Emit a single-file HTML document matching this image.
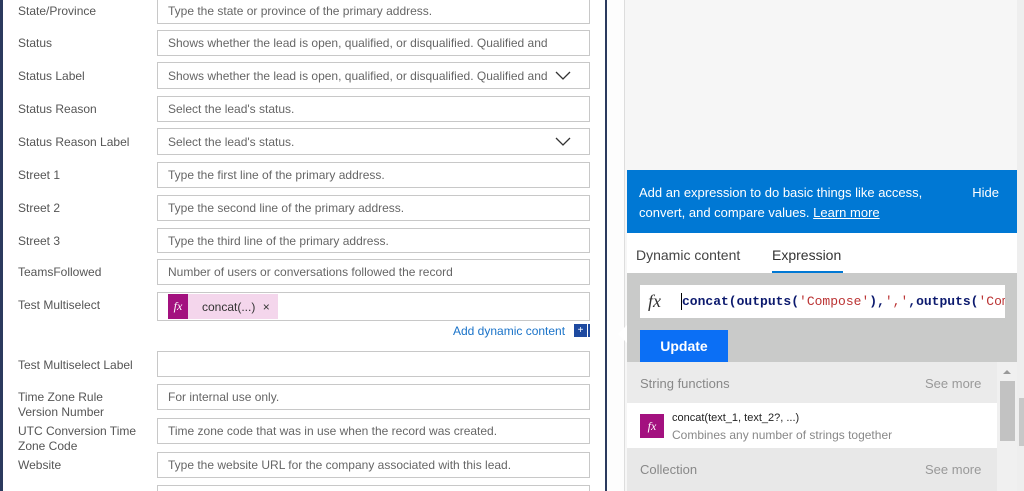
<!DOCTYPE html>
<html><head><style>
*{box-sizing:border-box;margin:0;padding:0}
html,body{width:1024px;height:491px;overflow:hidden}
body{background:#fff;font-family:"Liberation Sans",sans-serif;position:relative}
.lbl{position:absolute;left:18px;font-size:12px;color:#555;line-height:15px}
.box{position:absolute;left:157px;width:433px;border:1px solid #c8c8c8;background:#fff;font-size:12px;color:#666;padding-left:10px;display:flex;align-items:center;white-space:nowrap;overflow:hidden}
.chev{position:absolute;right:18px;top:6px}
.abs{position:absolute}
</style></head><body>
<div class="abs" style="left:0;top:0;width:3px;height:491px;background:#2b3a5e"></div>
<div class="abs" style="left:605px;top:0;width:2px;height:491px;background:#2b3a5e"></div>
<div class="abs" style="left:607px;top:0;width:18px;height:491px;background:#fdfdfd"></div>
<div class="abs" style="left:624px;top:0;width:1px;height:491px;background:#ddd"></div>
<div class="abs" style="left:625px;top:0;width:399px;height:491px;background:#f6f6f6"></div>
<div class="abs" style="left:1017px;top:0;width:7px;height:491px;background:#eee"></div>

<div class="lbl" style="top:4px">State/Province</div><div class="box" style="top:-2px;height:26px">Type the state or province of the primary address.</div>
<div class="lbl" style="top:36px">Status</div><div class="box" style="top:30px;height:26px">Shows whether the lead is open, qualified, or disqualified. Qualified and</div>
<div class="lbl" style="top:69px">Status Label</div><div class="box" style="top:62px;height:27px">Shows whether the lead is open, qualified, or disqualified. Qualified and<svg class="chev" width="16" height="12"><path d="M1 3l7 7 7-7" fill="none" stroke="#333" stroke-width="1.3"/></svg></div>
<div class="lbl" style="top:102px">Status Reason</div><div class="box" style="top:96px;height:26px">Select the lead's status.</div>
<div class="lbl" style="top:135px">Status Reason Label</div><div class="box" style="top:128px;height:27px">Select the lead's status.<svg class="chev" width="16" height="12"><path d="M1 3l7 7 7-7" fill="none" stroke="#333" stroke-width="1.3"/></svg></div>
<div class="lbl" style="top:168px">Street 1</div><div class="box" style="top:162px;height:26px">Type the first line of the primary address.</div>
<div class="lbl" style="top:201px">Street 2</div><div class="box" style="top:195px;height:26px">Type the second line of the primary address.</div>
<div class="lbl" style="top:234px">Street 3</div><div class="box" style="top:228px;height:25px">Type the third line of the primary address.</div>
<div class="lbl" style="top:265px">TeamsFollowed</div><div class="box" style="top:259px;height:26px">Number of users or conversations followed the record</div>
<div class="lbl" style="top:298px">Test Multiselect</div>
<div class="box" style="top:292px;height:29px;padding-left:10px">
<div style="display:flex;height:25px;background:#f4d6ec;align-items:center"><div style="width:20px;height:25px;background:#a3117f;color:#fff;font-family:'Liberation Serif',serif;font-style:italic;font-size:12px;display:flex;align-items:center;justify-content:center">fx</div><span style="color:#333;padding:0 8px 0 14px">concat(...) <span style="margin-left:4px">×</span></span></div></div>
<div class="abs" style="left:453px;top:324px;font-size:12px;color:#1a73c9">Add dynamic content</div>
<div class="abs" style="left:574px;top:324px;width:13px;height:13px;background:#1e4aa0;color:#fff;font-size:10px;text-align:center;line-height:13px">+</div>
<div class="abs" style="left:588px;top:324px;width:2px;height:13px;background:#1e4aa0"></div>
<div class="lbl" style="top:358px">Test Multiselect Label</div><div class="box" style="top:351px;height:26px"></div>
<div class="lbl" style="top:390px">Time Zone Rule<br>Version Number</div><div class="box" style="top:384px;height:26px">For internal use only.</div>
<div class="lbl" style="top:424px">UTC Conversion Time<br>Zone Code</div><div class="box" style="top:418px;height:26px">Time zone code that was in use when the record was created.</div>
<div class="lbl" style="top:458px">Website</div><div class="box" style="top:452px;height:26px">Type the website URL for the company associated with this lead.</div>
<div class="box" style="top:485px;height:26px"></div>

<div class="abs" style="left:627px;top:170px;width:390px;height:63px;background:#0078d4;color:#fff;font-size:13px;line-height:20px;padding:13px 12px">Add an expression to do basic things like access,<br>convert, and compare values. <u>Learn more</u><span style="position:absolute;right:18px;top:13px">Hide</span></div>
<div class="abs" style="left:627px;top:233px;width:390px;height:40px;background:#fff"></div>
<div class="abs" style="left:636px;top:247px;font-size:14px;color:#444">Dynamic content</div>
<div class="abs" style="left:772px;top:247px;font-size:14px;color:#333">Expression</div>
<div class="abs" style="left:772px;top:271px;width:71px;height:3px;background:#0078d4"></div>
<div class="abs" style="left:627px;top:273px;width:390px;height:89px;background:#c9cac9"></div>
<div class="abs" style="left:640px;top:285px;width:365px;height:33px;background:#fff;overflow:hidden;white-space:nowrap">
<span style="position:absolute;left:8px;top:6px;font-family:'Liberation Serif',serif;font-style:italic;font-size:18px;color:#333">fx</span>
<span style="position:absolute;left:41px;top:8px;width:1px;height:17px;background:#000"></span>
<span style="position:absolute;left:42px;top:9px;font-family:'Liberation Mono',monospace;font-size:13px;font-weight:bold;color:#0c1a6e">concat(outputs(<span style="color:#b33;font-weight:normal">'Compose'</span>),<span style="color:#b33;font-weight:normal">','</span>,outputs(<span style="color:#b33;font-weight:normal">'Compose</span></span></div>
<div class="abs" style="left:618px;top:325px;width:0;height:0;border:9px solid transparent;border-right-color:#fff;border-left:0"></div>
<div class="abs" style="left:640px;top:330px;width:88px;height:32px;background:#0b6ff5;color:#fff;font-size:14px;font-weight:bold;text-align:center;line-height:32px">Update</div>
<div class="abs" style="left:627px;top:362px;width:370px;height:41px;background:#ebebeb"></div>
<div class="abs" style="left:640px;top:376px;font-size:13px;color:#888">String functions</div>
<div class="abs" style="left:925px;top:376px;font-size:13px;color:#999">See more</div>
<div class="abs" style="left:627px;top:403px;width:370px;height:45px;background:#fff"></div>
<div class="abs" style="left:640px;top:414px;width:24px;height:24px;background:#a3117f;color:#fff;font-family:'Liberation Serif',serif;font-style:italic;font-size:12px;text-align:center;line-height:24px">fx</div>
<div class="abs" style="left:672px;top:412px;font-size:11px;color:#222">concat(text_1, text_2?, ...)</div>
<div class="abs" style="left:672px;top:428px;font-size:12px;color:#888">Combines any number of strings together</div>
<div class="abs" style="left:627px;top:448px;width:370px;height:43px;background:#e8e8e8"></div>
<div class="abs" style="left:640px;top:462px;font-size:13px;color:#888">Collection</div>
<div class="abs" style="left:925px;top:462px;font-size:13px;color:#999">See more</div>
<div class="abs" style="left:997px;top:362px;width:20px;height:129px;background:#f0f0f0"></div>
<div class="abs" style="left:1000px;top:381px;width:15px;height:60px;background:#c2c2c2"></div>
<div class="abs" style="left:1003px;top:370px;width:0;height:0;border:4px solid transparent;border-bottom-color:#999;border-top:0"></div>
<div class="abs" style="left:1019px;top:398px;width:5px;height:48px;background:#c8c8c8"></div>
</body></html>
